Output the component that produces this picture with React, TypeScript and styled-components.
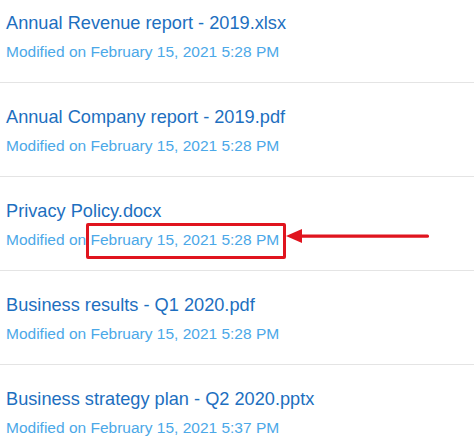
import styled, { createGlobalStyle } from "styled-components";

const GlobalStyle = createGlobalStyle`
  html, body {
    margin: 0;
    padding: 0;
    background: #ffffff;
  }
  body {
    font-family: "Liberation Sans", Arial, sans-serif;
    overflow: hidden;
  }
`;

const Page = styled.div`
  width: 474px;
  height: 442px;
  overflow: hidden;
`;

const FileList = styled.ul`
  list-style: none;
  margin: -11px 0 0;
  padding: 0;
`;

const FileItem = styled.li`
  padding: 22px 6px 20px;
  border-bottom: 1px solid #e4e4e4;
`;

const FileName = styled.a`
  display: block;
  font-size: 18.2px;
  line-height: 24px;
  color: #1d6fc0;
  text-decoration: none;
  white-space: nowrap;
`;

const Modified = styled.div`
  margin-top: 7px;
  font-size: 15.5px;
  line-height: 20px;
  color: #4ba8e8;
  white-space: nowrap;
`;

const Highlight = styled.span`
  position: relative;
  &::after {
    content: "";
    position: absolute;
    top: -8px;
    bottom: -11px;
    left: -4px;
    right: -7px;
    border: 3px solid #e0141e;
    border-radius: 2px;
  }
`;

const Arrow = styled.svg`
  position: absolute;
  left: calc(100% + 7px);
  top: -3px;
`;

const files = [
  { name: "Annual Revenue report - 2019.xlsx", date: "February 15, 2021 5:28 PM" },
  { name: "Annual Company report - 2019.pdf", date: "February 15, 2021 5:28 PM" },
  { name: "Privacy Policy.docx", date: "February 15, 2021 5:28 PM", marked: true },
  { name: "Business results - Q1 2020.pdf", date: "February 15, 2021 5:28 PM" },
  { name: "Business strategy plan - Q2 2020.pptx", date: "February 15, 2021 5:37 PM" },
];

export default function App() {
  return (
    <Page>
      <GlobalStyle />
      <FileList>
        {files.map((file) => (
          <FileItem key={file.name}>
            <FileName href="#">{file.name}</FileName>
            <Modified>
              Modified on{" "}
              {file.marked ? (
                <Highlight>
                  {file.date}
                  <Arrow width="145" height="16" viewBox="0 0 145 16">
                    <path d="M0 8 L16 1 L16 15 Z" fill="#e0141e" />
                    <rect x="14" y="6.5" width="129" height="3.2" rx="1.5" fill="#e0141e" />
                  </Arrow>
                </Highlight>
              ) : (
                file.date
              )}
            </Modified>
          </FileItem>
        ))}
      </FileList>
    </Page>
  );
}
